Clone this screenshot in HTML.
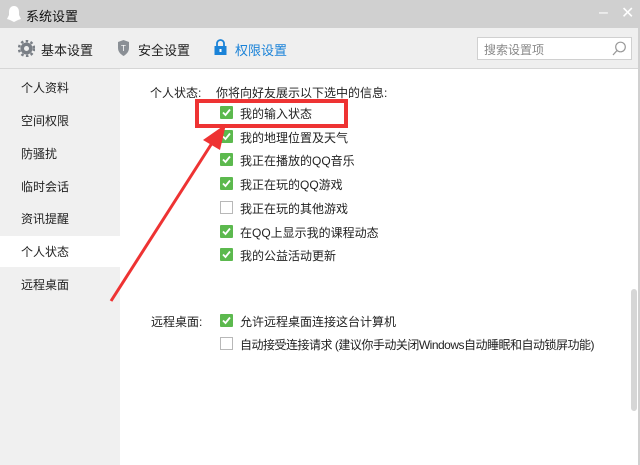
<!DOCTYPE html>
<html><head><meta charset="utf-8"><style>
*{margin:0;padding:0;box-sizing:border-box}
body{width:640px;height:465px;overflow:hidden;background:#fff;font-family:"Liberation Sans","Noto Sans CJK SC",sans-serif;font-size:12px;color:#222;position:relative}
.a{position:absolute;white-space:nowrap}
.title{left:0;top:0;width:640px;height:28px;background:#d0d0d0}
.tb{left:0;top:28px;width:640px;height:41px;background:#efefef;border-bottom:1px solid #d6d6d6}
.side{left:0;top:69px;width:120px;height:396px;background:#f0f0f0}
.cb{position:absolute;width:13px;height:13px;background:#5cb94e;border-radius:1px}
.cb svg{position:absolute;left:1px;top:1px}
.ub{position:absolute;width:13px;height:13px;border:1px solid #b8b8b8;background:#fff}
.si{left:21px;font-size:12px;color:#222}
</style></head><body>
<div class="a title"></div>
<svg class="a" style="left:6px;top:5px" width="16" height="18" viewBox="0 0 16 18"><path d="M8 1C4.5 1 3 4 3 7v3L1 14l3 1 4 2 4-2 3-1-2-4V7c0-3-1.5-6-5-6z" fill="#fff"/></svg>
<div class="a" style="left:26px;top:6px;font-size:13px;color:#111">系统设置</div>
<div class="a" style="left:599px;top:4px;color:#fff;font-size:16px">–</div>
<div class="a" style="left:621px;top:3px;color:#fff;font-size:16px">✕</div>
<div class="a tb"></div>
<svg class="a" style="left:18px;top:40px" width="17" height="17" viewBox="0 0 17 17"><circle cx="8.5" cy="8.5" r="6" fill="#7a7f86"/><circle cx="8.5" cy="8.5" r="7.5" fill="none" stroke="#7a7f86" stroke-width="2.5" stroke-dasharray="2.5 2.4"/><circle cx="8.5" cy="8.5" r="2.5" fill="#efefef"/></svg>
<div class="a" style="left:41px;top:40px;font-size:13px;color:#222">基本设置</div>
<svg class="a" style="left:117px;top:40px" width="13" height="16" viewBox="0 0 13 16"><path d="M1 2L6.5 0 12 2v6c0 4-3 6.5-5.5 8C4 14.5 1 12 1 8z" fill="#8a8f95"/><text x="4" y="11" font-size="8" fill="#fff" font-family="Liberation Sans">T</text></svg>
<div class="a" style="left:138px;top:40px;font-size:13px;color:#222">安全设置</div>
<svg class="a" style="left:214px;top:39px" width="13" height="17" viewBox="0 0 13 17"><path d="M3 7V4.5a3.5 3.5 0 0 1 7 0V7" fill="none" stroke="#1b83d8" stroke-width="1.8"/><rect x="0.5" y="7" width="12" height="9" fill="#1b83d8"/><rect x="5.5" y="10" width="2" height="3" fill="#fff"/></svg>
<div class="a" style="left:235px;top:40px;font-size:13px;color:#1b83d8">权限设置</div>
<div class="a" style="left:477px;top:37px;width:155px;height:23px;background:#fff;border:1px solid #d0d0d0"></div>
<div class="a" style="left:484px;top:41px;color:#888">搜索设置项</div>
<svg class="a" style="left:612px;top:41px" width="15" height="15" viewBox="0 0 15 15"><circle cx="8.5" cy="6" r="4.8" fill="none" stroke="#999" stroke-width="1.2"/><path d="M5 9.5L1 14" stroke="#999" stroke-width="1.3"/></svg>
<div class="a side"></div>
<div class="a" style="left:0;top:236px;width:120px;height:31px;background:#fff"></div>
<div class="a si" style="top:79px">个人资料</div>
<div class="a si" style="top:112px">空间权限</div>
<div class="a si" style="top:145px">防骚扰</div>
<div class="a si" style="top:178px">临时会话</div>
<div class="a si" style="top:210px">资讯提醒</div>
<div class="a si" style="top:243px">个人状态</div>
<div class="a si" style="top:276px">远程桌面</div>
<div class="a" style="left:150px;top:84px">个人状态:</div>
<div class="a" style="left:216px;top:84px">你将向好友展示以下选中的信息:</div>
<div id="list"></div>
<div class="a" style="left:151px;top:313px">远程桌面:</div>
<div class="a" style="left:631px;top:289px;width:6px;height:122px;background:#d6d6d6;border-radius:3px"></div>
<div class="a" style="left:638px;top:28px;width:2px;height:437px;background:#d0d0d0"></div>
<div class="a" style="left:195px;top:99px;width:153px;height:29px;border:4px solid #ee3333"></div>
<svg class="a" style="left:0;top:0" width="640" height="465"><path d="M111 301L214 140" stroke="#ee3333" stroke-width="3"/><path d="M226 124L203 140L220 150Z" fill="#ee3333"/></svg>
<script>
var items=[[1,"我的输入状态",105],[1,"我的地理位置及天气",129],[1,"我正在播放的QQ音乐",152],[1,"我正在玩的QQ游戏",176],[0,"我正在玩的其他游戏",200],[1,"在QQ上显示我的课程动态",224],[1,"我的公益活动更新",247],[1,"允许远程桌面连接这台计算机",313],[0,"自动接受连接请求 (建议你手动关闭Windows自动睡眠和自动锁屏功能)",336]];
var h="";items.forEach(function(t,i){
h+=t[0]?'<div class="cb" style="left:220px;top:'+(t[2]+1)+'px"><svg width="11" height="11" viewBox="0 0 11 11"><path d="M2 5.5L4.5 8 9 2.5" fill="none" stroke="#fff" stroke-width="1.8"/></svg></div>':'<div class="ub" style="left:220px;top:'+(t[2]+1)+'px"></div>';
h+='<div class="a" style="left:240px;top:'+t[2]+'px;'+(i==8?'letter-spacing:-0.5px':'')+'">'+t[1]+'</div>';});
document.getElementById("list").innerHTML=h;
</script>
</body></html>
